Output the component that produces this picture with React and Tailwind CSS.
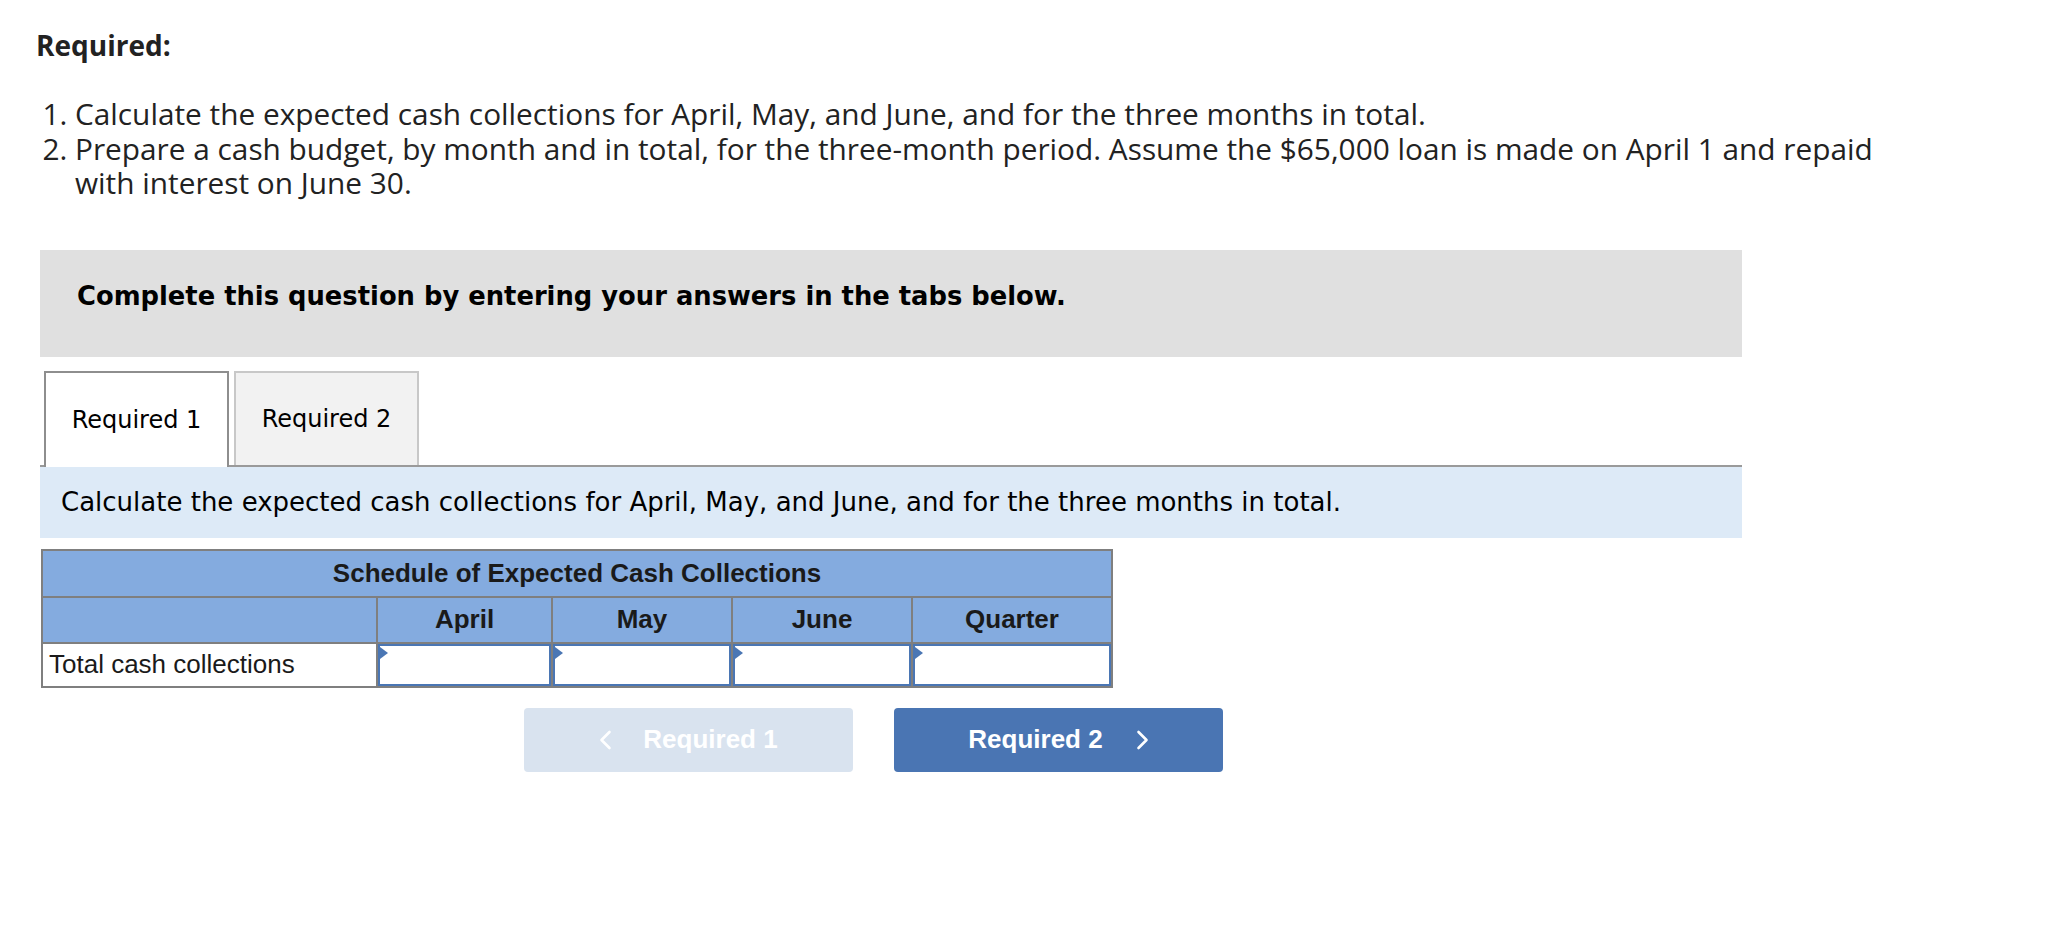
import { useState } from 'react';

const months = ['April', 'May', 'June', 'Quarter'];

const Chevron = ({ dir = 'right', className = '' }) => (
  <svg viewBox="0 0 12 20" className={className} fill="none" stroke="currentColor" strokeWidth="2.6" strokeLinecap="round" strokeLinejoin="round">
    {dir === 'right' ? <polyline points="2,2 10,10 2,18" /> : <polyline points="10,2 2,10 10,18" />}
  </svg>
);

const App = () => {
  const [values, setValues] = useState({ April: '', May: '', June: '', Quarter: '' });
  const [tab, setTab] = useState(1);

  return (
    <div className="min-h-screen bg-white text-[#222]">
      <div className="w-[1702px] ml-[40px] pt-[29px]">
        {/* Question */}
        <h2 className="font-['Open_Sans',sans-serif] font-bold text-[28px] leading-[32px] -ml-[4px]">Required:</h2>
        <ol className="w-[1850px] mt-[36px] font-['Open_Sans',sans-serif] text-[29.8px] leading-[34.5px] list-decimal pl-[35px]">
          <li>Calculate the expected cash collections for April, May, and June, and for the three months in total.</li>
          <li>Prepare a cash budget, by month and in total, for the three-month period. Assume the $65,000 loan is made on April 1 and repaid with interest on June 30.</li>
        </ol>

        {/* Instruction banner */}
        <div className="mt-[49px] h-[107px] bg-[#e0e0e0] flex items-center pl-[37px] pb-[14px]">
          <p className="font-['DejaVu_Sans',sans-serif] font-bold text-[25.8px] text-black">
            Complete this question by entering your answers in the tabs below.
          </p>
        </div>

        {/* Tabs */}
        <div className="mt-[14px] flex items-end gap-[5px] pl-[4px] border-b-2 border-[#9a9a9a] font-['DejaVu_Sans',sans-serif] text-[24px] text-black">
          <button
            onClick={() => setTab(1)}
            className="w-[185px] h-[96px] -mb-[2px] bg-white border-2 border-b-0 border-[#8e8e8e]"
          >
            Required 1
          </button>
          <button
            onClick={() => setTab(2)}
            className="w-[185px] h-[94px] bg-[#f2f2f2] border-2 border-b-0 border-[#c8c8c8]"
          >
            Required 2
          </button>
        </div>

        <div className="h-[71px] bg-[#ddeaf7] flex items-center pl-[21px] font-['DejaVu_Sans',sans-serif] text-[26px] text-black">
          Calculate the expected cash collections for April, May, and June, and for the three months in total.
        </div>

        {/* Schedule table */}
        <table className="mt-[11px] ml-px border-collapse border-2 border-[#7f7f7f] font-['Liberation_Sans',sans-serif] text-[26px] text-[#1a1a1a]">
          <thead>
            <tr className="h-[47px] bg-[#84abdf]">
              <th colSpan={5} className="border-2 border-[#7f7f7f] font-bold text-center">
                Schedule of Expected Cash Collections
              </th>
            </tr>
            <tr className="h-[46px] bg-[#84abdf]">
              <th className="w-[335px] border-2 border-[#7f7f7f]"></th>
              {months.map((m, i) => (
                <th
                  key={m}
                  className={`border-2 border-[#7f7f7f] font-bold text-center ${
                    i === 0 ? 'w-[175px]' : i === 3 ? 'w-[200px]' : 'w-[180px]'
                  }`}
                >
                  {m}
                </th>
              ))}
            </tr>
          </thead>
          <tbody>
            <tr className="h-[44px] bg-white">
              <td className="border-2 border-[#7f7f7f] pl-[6px] text-left">Total cash collections</td>
              {months.map((m) => (
                <td key={m} className="border-2 border-[#7f7f7f] p-0 h-[44px]">
                  <div className="relative h-[42px]">
                    <input
                      value={values[m]}
                      onChange={(e) => setValues({ ...values, [m]: e.target.value })}
                      className="w-full h-full border-2 border-[#4a76b4] bg-white px-2 text-right outline-none"
                    />
                    <span className="absolute left-[2px] top-[3px] w-0 h-0 border-y-[6px] border-y-transparent border-l-[8px] border-l-[#4a76b4]" />
                  </div>
                </td>
              ))}
            </tr>
          </tbody>
        </table>

        {/* Navigation */}
        <div className="mt-[20px] ml-[484px] flex gap-[41px] font-['Liberation_Sans',sans-serif] font-bold text-[26px] text-white">
          <button className="w-[329px] h-[64px] rounded-[4px] bg-[#d9e3ef] flex items-center justify-center gap-[31px] cursor-default">
            <Chevron dir="left" className="w-[13px] h-[20px]" />
            <span>Required 1</span>
          </button>
          <button className="w-[329px] h-[64px] rounded-[4px] bg-[#4a75b3] flex items-center justify-center gap-[33px]">
            <span>Required 2</span>
            <Chevron className="w-[13px] h-[20px]" />
          </button>
        </div>
      </div>
    </div>
  );
};

export default App;
